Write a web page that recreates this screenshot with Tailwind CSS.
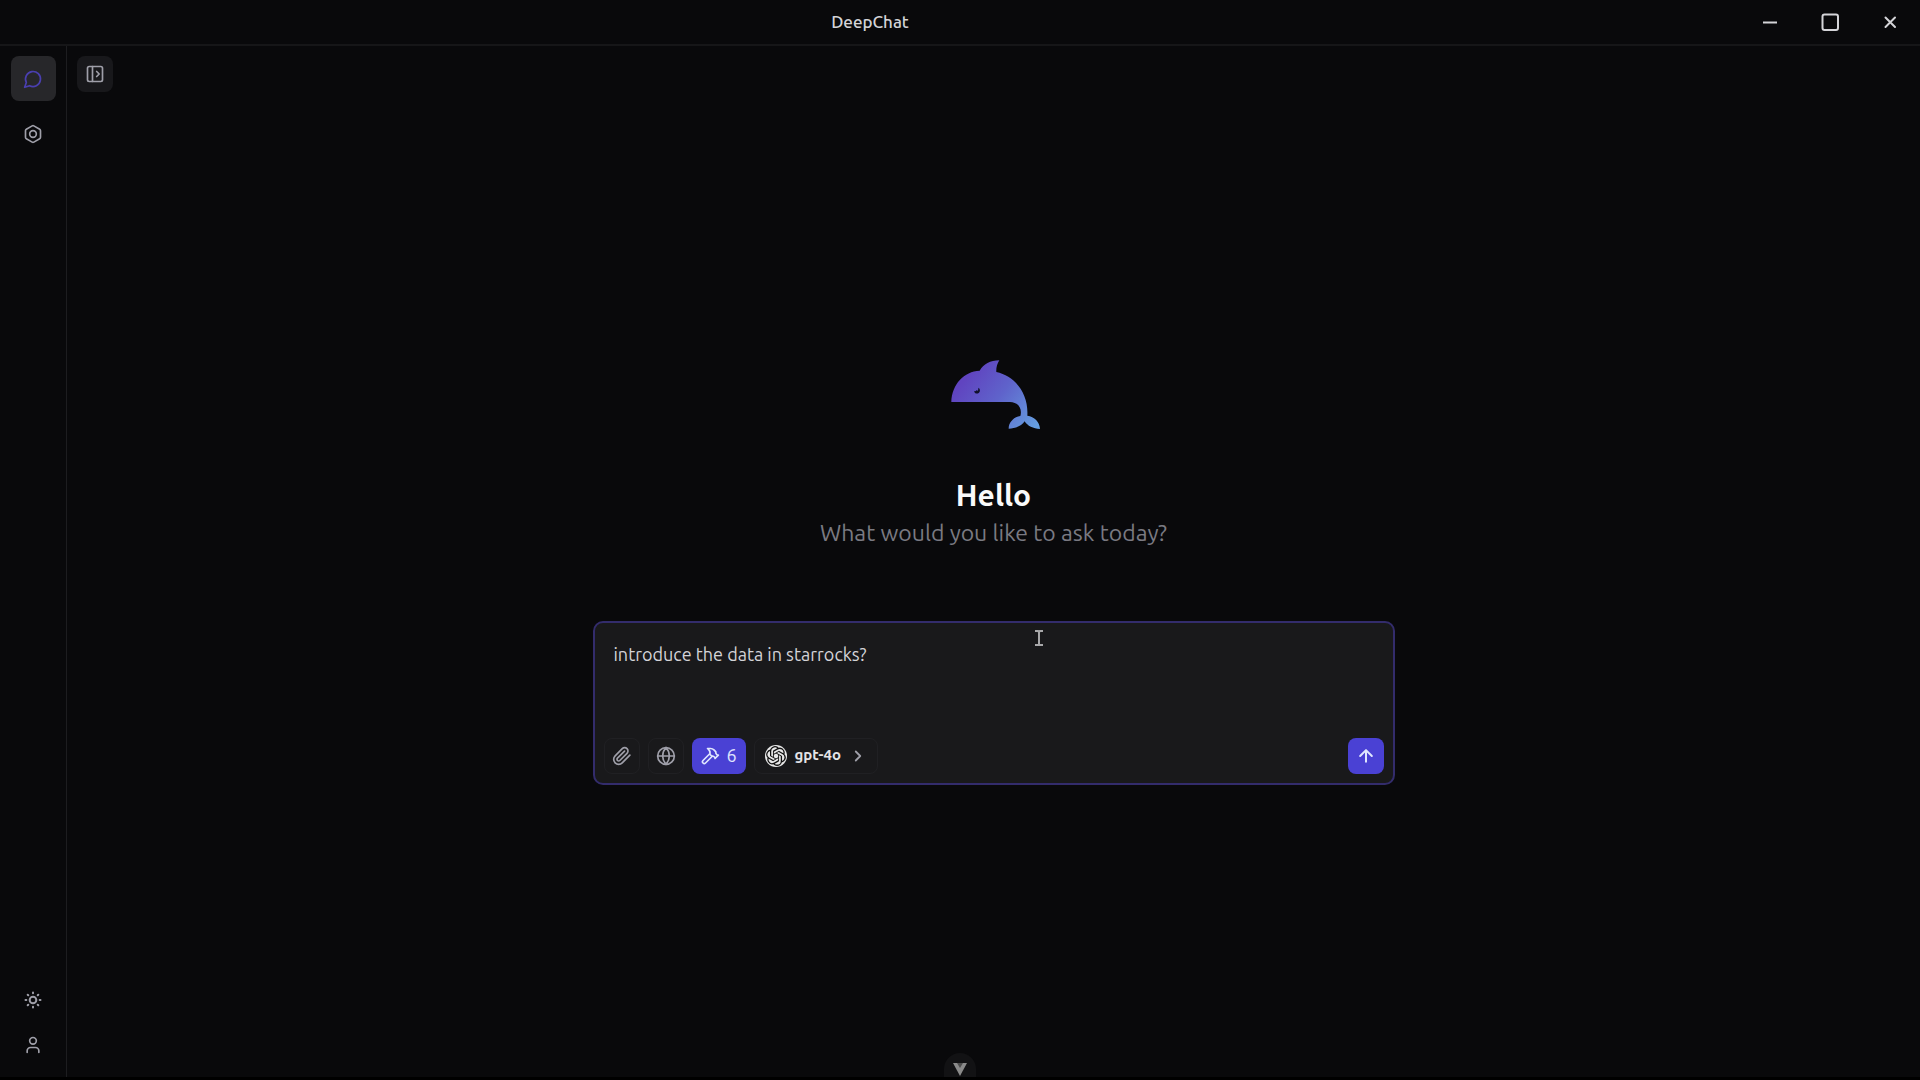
<!DOCTYPE html>
<html lang="en">
<head>
    <meta charset="UTF-8" />
    <meta name="viewport" content="width=device-width, initial-scale=1.0" />
    <title>DeepChat</title>
    <script src="https://cdn.jsdelivr.net/npm/@tailwindcss/browser@4"></script>
</head>
<body class="bg-black font-['Ubuntu','Noto_Sans',sans-serif] text-zinc-300">
    <div class="flex h-screen flex-col pb-[3px]">
        <div class="flex min-h-0 flex-1 flex-col bg-[#09090b]">
            <!-- Title bar -->
            <header class="flex h-[46px] shrink-0 items-center border-b-2 border-[#161618]">
                <h1 class="flex-1 text-center text-[17px] font-medium text-zinc-300">DeepChat</h1>
                <div class="flex">
                    <button aria-label="Minimize" class="flex h-11 w-[60px] items-center justify-center">
                        <svg class="size-5" viewBox="0 0 20 20" fill="none" stroke="currentColor" stroke-width="2"><path d="M3 10.5h14" /></svg>
                    </button>
                    <button aria-label="Maximize" class="flex h-11 w-[60px] items-center justify-center">
                        <svg class="size-5" viewBox="0 0 20 20" fill="none" stroke="currentColor" stroke-width="2"><rect x="2.5" y="2.5" width="15.5" height="15.5" rx="2" /></svg>
                    </button>
                    <button aria-label="Close" class="flex h-11 w-[60px] items-center justify-center">
                        <svg class="size-5" viewBox="0 0 20 20" fill="none" stroke="currentColor" stroke-width="2" stroke-linecap="round"><path d="M5.5 5.5l9.5 9.5M15 5.5L5.5 15" /></svg>
                    </button>
                </div>
            </header>

            <div class="flex min-h-0 flex-1">
                <!-- Sidebar -->
                <nav class="flex w-[67px] shrink-0 flex-col items-center justify-between border-r border-[#1d1d20] py-[10px] text-zinc-400">
                    <div class="flex flex-col gap-[10px]">
                        <button aria-label="Chat" class="flex size-[45px] items-center justify-center rounded-lg bg-[#27272a] text-[#4a3fb0]">
                            <svg class="size-5" viewBox="0 0 24 24" fill="none" stroke="currentColor" stroke-width="2" stroke-linecap="round" stroke-linejoin="round"><path d="M7.9 20A9 9 0 1 0 4 16.1L2 22Z" /></svg>
                        </button>
                        <button aria-label="Settings" class="flex size-[45px] items-center justify-center rounded-lg">
                            <svg class="size-5" viewBox="0 0 24 24" fill="none" stroke="currentColor" stroke-width="2" stroke-linecap="round" stroke-linejoin="round"><path d="M21 16V8a2 2 0 0 0-1-1.73l-7-4a2 2 0 0 0-2 0l-7 4A2 2 0 0 0 3 8v8a2 2 0 0 0 1 1.73l7 4a2 2 0 0 0 2 0l7-4A2 2 0 0 0 21 16z" /><circle cx="12" cy="12" r="4" /></svg>
                        </button>
                    </div>
                    <div class="flex flex-col">
                        <button aria-label="Theme" class="flex size-[45px] items-center justify-center">
                            <svg class="size-5" viewBox="0 0 24 24" fill="none" stroke="currentColor" stroke-width="2.4" stroke-linecap="round"><circle cx="12" cy="12" r="4" /><path d="M12 3v1M12 20v1M3 12h1M20 12h1M18.364 5.636l-.707.707M6.343 17.657l-.707.707M5.636 5.636l.707.707M17.657 17.657l.707.707" /></svg>
                        </button>
                        <button aria-label="Account" class="flex size-[45px] items-center justify-center">
                            <svg class="size-5" viewBox="0 0 24 24" fill="none" stroke="currentColor" stroke-width="2" stroke-linecap="round" stroke-linejoin="round"><path d="M19 21v-2a4 4 0 0 0-4-4H9a4 4 0 0 0-4 4v2" /><circle cx="12" cy="7" r="4" /></svg>
                        </button>
                    </div>
                </nav>

                <main class="flex min-w-0 flex-1 flex-col">
                    <div class="flex p-[10px]">
                        <button aria-label="Open sidebar" class="flex size-9 items-center justify-center rounded-lg bg-[#18181b] text-zinc-400">
                            <svg class="size-5" viewBox="0 0 24 24" fill="none" stroke="currentColor" stroke-width="2" stroke-linecap="round" stroke-linejoin="round"><rect x="3" y="3" width="18" height="18" rx="2" /><path d="M9 3v18M14 9l3 3-3 3" /></svg>
                        </button>
                    </div>

                    <section class="flex flex-1 flex-col items-center justify-center px-6 pb-9">
                        <svg class="ml-[5px] h-[72px] w-[92px]" viewBox="90 57 276 216" role="img" aria-label="DeepChat logo">
                            <defs>
                                <linearGradient id="body" x1="0" y1="0.3" x2="1" y2="0.9">
                                    <stop offset="0.1" stop-color="#6044c0" />
                                    <stop offset="0.5" stop-color="#5f63cb" />
                                    <stop offset="1" stop-color="#659fe0" />
                                </linearGradient>
                            </defs>
                            <path fill="url(#body)" d="M94 186C96 132 132 94 179 92C190 72 211 61 238 61C231 73 228 84 229 96C285 108 326 160 322 227C343 230 359 245 360 267C340 266 322 258 314 244C305 258 287 265 266 266C266 247 281 231 301 228C307 207 297 187 270 186Z" />
                            <path fill="#11112a" d="M176 143C181 148 181 155 176 159C171 163 163 160 162 153C165 155 168 154 169 151L174 152C175 149 174 146 176 143Z" />
                        </svg>
                        <h2 class="mt-11 text-[30px] leading-[40px] font-bold text-zinc-50">Hello</h2>
                        <p class="text-[23px] leading-[36px] text-[#7a7a82]">What would you like to ask today?</p>

                        <!-- Prompt box -->
                        <form class="mt-[70px] w-full max-w-[802px] rounded-[10px] border-2 border-[#332c6c] bg-[#19191b] p-[9px]">
                            <div class="relative">
                                <textarea aria-label="Message" class="block h-[106px] w-full resize-none px-[10px] pt-[10px] text-[18px] leading-6 text-zinc-300 outline-none">introduce the data in starrocks?</textarea>
                                <svg class="absolute -top-[3px] left-[430px] h-[18px] w-[10px]" viewBox="0 0 10 18" fill="none" stroke="#a8a8aa" stroke-width="2"><path d="M1 2h3l1 1 1-1h3M5 3v12M1 16h3l1-1 1 1h3" /></svg>
                            </div>
                            <div class="flex items-center gap-2">
                                <button type="button" aria-label="Attach file" class="flex size-9 items-center justify-center rounded-lg border border-[#202023] text-zinc-400">
                                    <svg class="size-5" viewBox="0 0 24 24" fill="none" stroke="currentColor" stroke-width="2" stroke-linecap="round" stroke-linejoin="round"><path d="m21.44 11.05-9.19 9.19a6 6 0 0 1-8.49-8.49l8.57-8.57A4 4 0 1 1 18 8.84l-8.59 8.57a2 2 0 0 1-2.83-2.83l8.49-8.48" /></svg>
                                </button>
                                <button type="button" aria-label="Web search" class="flex size-9 items-center justify-center rounded-lg border border-[#202023] text-zinc-400">
                                    <svg class="size-5" viewBox="0 0 24 24" fill="none" stroke="currentColor" stroke-width="2" stroke-linecap="round" stroke-linejoin="round"><circle cx="12" cy="12" r="10" /><path d="M12 2a14.5 14.5 0 0 0 0 20 14.5 14.5 0 0 0 0-20M2 12h20" /></svg>
                                </button>
                                <button type="button" aria-label="Tools, 6 enabled" class="flex h-9 w-[54px] items-center justify-center gap-[6px] rounded-lg bg-[#4a41d4] text-[18px] text-indigo-100">
                                    <svg class="size-5" viewBox="0 0 24 24" fill="none" stroke="currentColor" stroke-width="2" stroke-linecap="round" stroke-linejoin="round"><path d="m15 12-8.373 8.373a1 1 0 1 1-3-3L12 9M18 15l4-4M21.5 11.5l-1.914-1.914A2 2 0 0 1 19 8.172V7l-2.26-2.26a6 6 0 0 0-4.202-1.756L9 2.96l.92.82A6.18 6.18 0 0 1 12 8.4V10l2 2h1.172a2 2 0 0 1 1.414.586L18.5 14.5" /></svg>
                                    <span>6</span>
                                </button>
                                <button type="button" class="flex h-9 items-center gap-2 rounded-lg border border-[#202023] px-[10px] text-[15px] font-bold text-zinc-200">
                                    <svg class="size-[22px]" viewBox="0 0 32 32"><circle cx="16" cy="16" r="16" fill="#e8e8e8" /><path transform="translate(1.6 1.6) scale(1.2)" fill="#111" d="M22.2819 9.8211a5.9847 5.9847 0 0 0-.5157-4.9108 6.0462 6.0462 0 0 0-6.5098-2.9A6.0651 6.0651 0 0 0 4.9807 4.1818a5.9847 5.9847 0 0 0-3.9977 2.9 6.0462 6.0462 0 0 0 .7427 7.0966 5.98 5.98 0 0 0 .511 4.9107 6.051 6.051 0 0 0 6.5146 2.9001A5.9847 5.9847 0 0 0 13.2599 24a6.0557 6.0557 0 0 0 5.7718-4.2058 5.9894 5.9894 0 0 0 3.9977-2.9001 6.0557 6.0557 0 0 0-.7475-7.0729zm-9.022 12.6081a4.4755 4.4755 0 0 1-2.8764-1.0408l.1419-.0804 4.7783-2.7582a.7948.7948 0 0 0 .3927-.6813v-6.7369l2.02 1.1686a.071.071 0 0 1 .038.052v5.5826a4.504 4.504 0 0 1-4.4945 4.4944zm-9.6607-4.1254a4.4708 4.4708 0 0 1-.5346-3.0137l.142.0852 4.783 2.7582a.7712.7712 0 0 0 .7806 0l5.8428-3.3685v2.3324a.0804.0804 0 0 1-.0332.0615L9.74 19.9502a4.4992 4.4992 0 0 1-6.1408-1.6464zM2.3408 7.8956a4.485 4.485 0 0 1 2.3655-1.9728V11.6a.7664.7664 0 0 0 .3879.6765l5.8144 3.3543-2.0201 1.1685a.0757.0757 0 0 1-.071 0l-4.8303-2.7865A4.504 4.504 0 0 1 2.3408 7.872zm16.5963 3.8558L13.1038 8.364 15.1192 7.2a.0757.0757 0 0 1 .071 0l4.8303 2.7913a4.4944 4.4944 0 0 1-.6765 8.1042v-5.6772a.79.79 0 0 0-.407-.667zm2.0107-3.0231l-.142-.0852-4.7735-2.7818a.7759.7759 0 0 0-.7854 0L9.409 9.2297V6.8974a.0662.0662 0 0 1 .0284-.0615l4.8303-2.7866a4.4992 4.4992 0 0 1 6.6802 4.66zM8.3065 12.863l-2.02-1.1638a.0804.0804 0 0 1-.038-.0567V6.0742a4.4992 4.4992 0 0 1 7.3757-3.4537l-.142.0805L8.704 5.459a.7948.7948 0 0 0-.3927.6813zm1.0976-2.3654l2.602-1.4998 2.6069 1.4998v2.9994l-2.5974 1.4997-2.6067-1.4997Z" /></svg>
                                    <span>gpt-4o</span>
                                    <svg class="size-[18px] text-zinc-400" viewBox="0 0 24 24" fill="none" stroke="currentColor" stroke-width="2.4" stroke-linecap="round" stroke-linejoin="round"><path d="m9 18 6-6-6-6" /></svg>
                                </button>
                                <button type="submit" aria-label="Send" class="ml-auto flex size-9 items-center justify-center rounded-lg bg-[#4a41d4] text-indigo-100">
                                    <svg class="size-5" viewBox="0 0 24 24" fill="none" stroke="currentColor" stroke-width="2.4" stroke-linecap="round" stroke-linejoin="round"><path d="m5 12 7-7 7 7M12 19V5" /></svg>
                                </button>
                            </div>
                        </form>
                    </section>
                </main>
            </div>
        </div>
    </div>

    <!-- Dev tools handle at the bottom edge -->
    <div class="absolute bottom-[3px] left-1/2 flex h-6 w-8 -translate-x-1/2 justify-center overflow-hidden rounded-t-full bg-[#121214]">
        <svg class="mt-[10px] h-[13px] w-[14px]" viewBox="0 0 14 13"><path fill="#8a8a8a" d="M0 0h14L7 13z" /><path fill="#4c4c4c" d="M4 0h6L7 5z" /></svg>
    </div>
</body>
</html>
